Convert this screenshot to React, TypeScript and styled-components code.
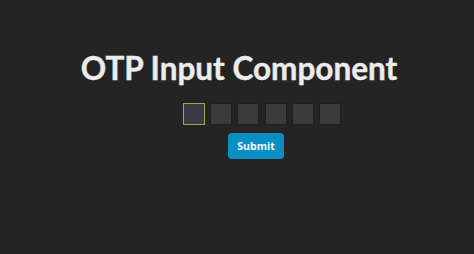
import React from "react";
import styled, { createGlobalStyle } from "styled-components";

const Global = createGlobalStyle`
  html, body { margin: 0; padding: 0; background: #242424; }
  body { font-family: "Open Sans", "Noto Sans", sans-serif; color: #e8e8e8; }
`;

const Page = styled.div`
  display: flex;
  flex-direction: column;
  align-items: center;
  padding-top: 48px;
  height: 254px;
  box-sizing: border-box;
`;

const Title = styled.h1`
  margin: 0;
  font-family: "Lato", "Open Sans", sans-serif;
  font-size: 31.5px;
  font-weight: 700;
  line-height: 40px;
  color: #ececec;
  padding-left: 4px;
  -webkit-text-stroke: 0.4px #ececec;
`;

const Row = styled.div`
  display: flex;
  gap: 5.4px;
  margin-top: 15px;
  padding-left: 50px;
`;

const Box = styled.input<{ $active?: boolean }>`
  width: 22px;
  height: 22px;
  box-sizing: border-box;
  margin: 0;
  padding: 0;
  background: ${(p) => (p.$active ? "#3a3a46" : "#3b3b3b")};
  border: 1px solid ${(p) => (p.$active ? "#aaa63c" : "#1e1e1e")};
  outline: none;
  color: #fff;
  text-align: center;
  font-family: inherit;
`;

const Button = styled.button`
  margin-top: 8px;
  margin-left: 38px;
  width: 56px;
  height: 26px;
  border: none;
  border-radius: 4px;
  background: #0a8fc4;
  color: #f2f8fb;
  font-family: "Open Sans", "Noto Sans", sans-serif;
  font-size: 10.5px;
  font-weight: 700;
  cursor: pointer;
`;

export default function App() {
  return (
    <>
      <Global />
      <Page>
        <Title>OTP Input Component</Title>
        <Row>
          {Array.from({ length: 6 }).map((_, i) => (
            <Box key={i} $active={i === 0} maxLength={1} />
          ))}
        </Row>
        <Button>Submit</Button>
      </Page>
    </>
  );
}
